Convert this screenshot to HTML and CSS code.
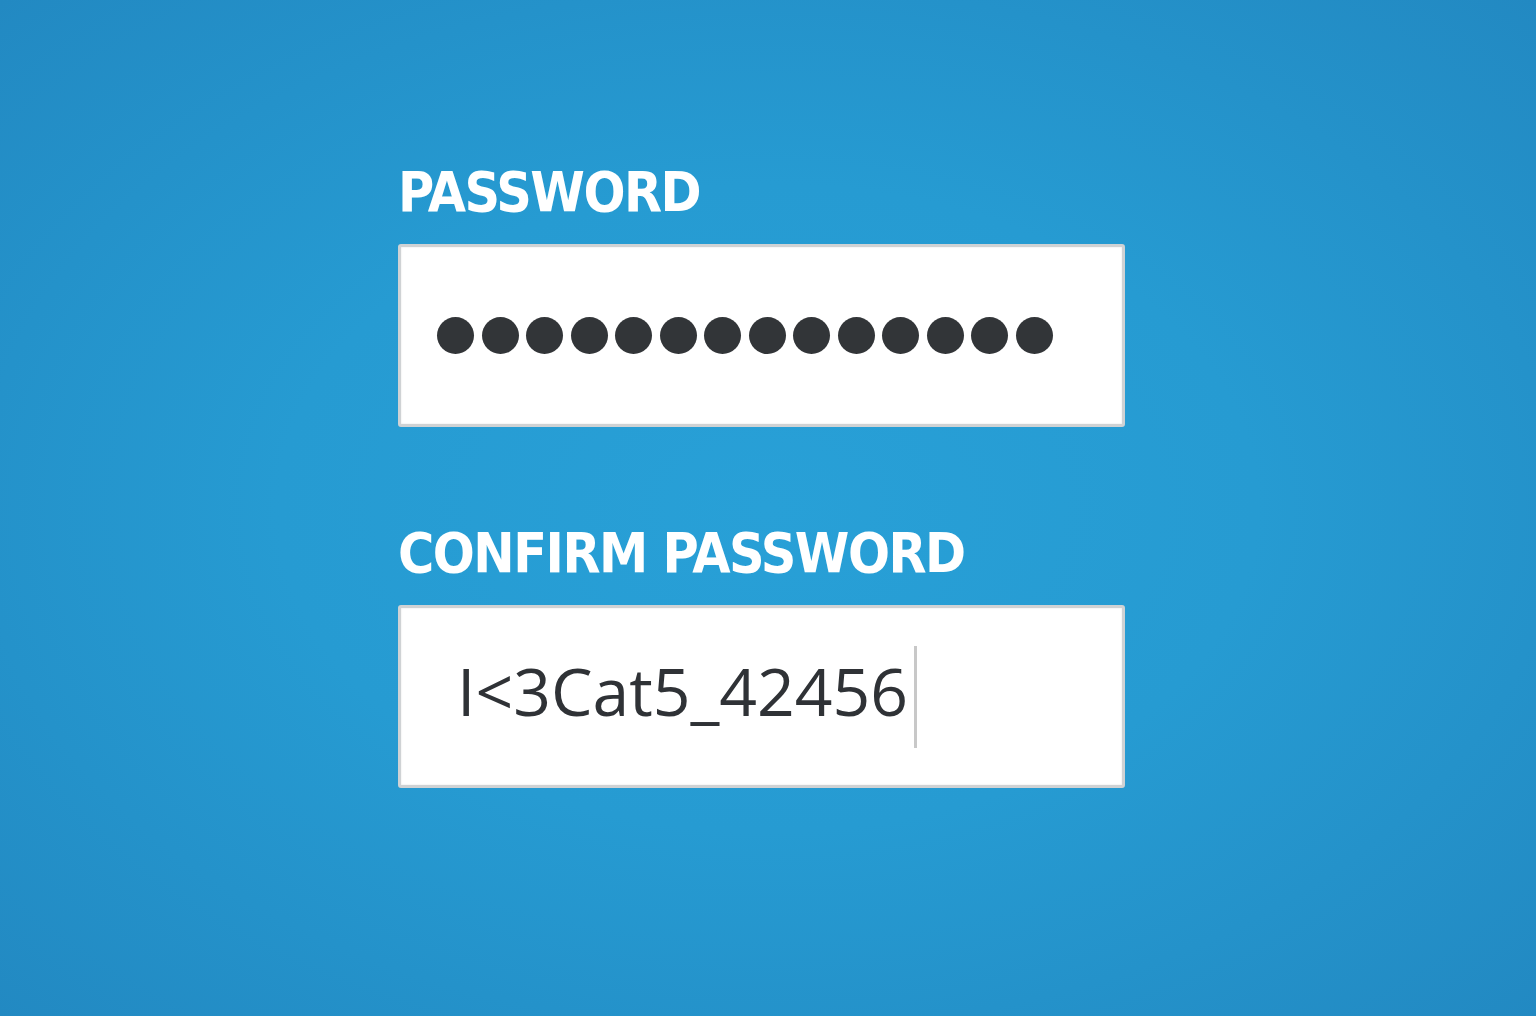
FILE: index.html
```html
<!DOCTYPE html>
<html lang="en">
<head>
    <meta charset="UTF-8">
    <title>Password</title>
    <link rel="stylesheet" href="styles.css">
</head>
<body>
    <div class="form">
        <div class="field">
            <div class="label">PASSWORD</div>
            <div class="input dots">
                <span class="dot"></span><span class="dot"></span><span class="dot"></span><span class="dot"></span>
                <span class="dot"></span><span class="dot"></span><span class="dot"></span><span class="dot"></span>
                <span class="dot"></span><span class="dot"></span><span class="dot"></span><span class="dot"></span>
                <span class="dot"></span><span class="dot"></span>
            </div>
        </div>
        <div class="field">
            <div class="label">CONFIRM PASSWORD</div>
            <div class="input plain">
                <span class="value">I&lt;3Cat5_42456</span><span class="caret"></span>
            </div>
        </div>
    </div>
</body>
</html>
```

FILE: styles.css
```css
html, body{
    height: 100%;
}
body{
    margin: 0;
    background: radial-gradient(ellipse at 50% 50%, #28a0d7 0%, #269bd2 45%, #2289c2 100%);
    font-family: "Open Sans", sans-serif;
}
.form{
    width: 727px;
    margin-left: 398px;
    padding-top: 160px;
    display: flex;
    flex-direction: column;
    gap: 94px;
}
.label{
    font-family: "DejaVu Sans Condensed", "DejaVu Sans", sans-serif;
    font-stretch: condensed;
    font-weight: bold;
    font-size: 55px;
    line-height: 64px;
    color: #fff;
    letter-spacing: -1.5px;
    margin-bottom: 20px;
}
.input{
    box-sizing: border-box;
    height: 183px;
    background: #fff;
    border: 3px solid #cfd2d4;
    border-radius: 3px;
    box-shadow: inset 0 0 2px rgba(0,0,0,.12);
    display: flex;
    align-items: center;
}
.dots{
    padding-left: 36px;
    gap: 7.5px;
}
.dot{
    width: 37px;
    height: 37px;
    border-radius: 50%;
    background: #323538;
}
.plain{
    padding-left: 56px;
}
.value{
    font-size: 66px;
    color: #2f3236;
    padding-bottom: 14px;
}
.caret{
    width: 3px;
    height: 102px;
    background: #c8c8c8;
    margin-left: 6px;
}
```
